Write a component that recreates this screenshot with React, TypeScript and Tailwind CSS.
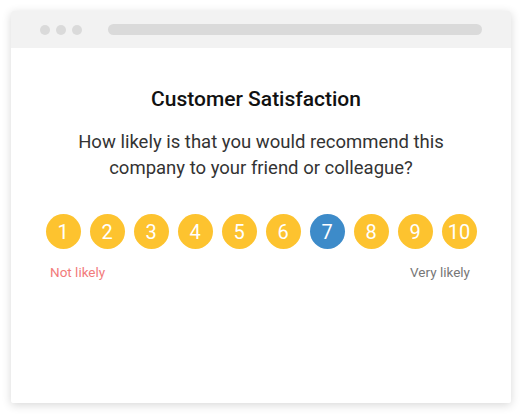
const scores = [1, 2, 3, 4, 5, 6, 7, 8, 9, 10];
const selected = 7;

export default function App() {
  return (
    <div className="min-h-screen bg-white pt-[11px] pl-[11px] font-['Roboto',sans-serif]">
      <div className="flex h-[392px] w-[500px] flex-col overflow-hidden rounded-[2px] bg-white shadow-[0_2px_10px_rgba(0,0,0,0.16)]">
        <div className="flex h-[37px] items-center bg-[#f2f2f2] px-[29px]">
          <div className="flex gap-[6px]">
            <span className="h-[10px] w-[10px] rounded-full bg-[#dadada]" />
            <span className="h-[10px] w-[10px] rounded-full bg-[#dadada]" />
            <span className="h-[10px] w-[10px] rounded-full bg-[#dadada]" />
          </div>
          <div className="ml-[26px] h-[11px] flex-1 rounded-full bg-[#dadada]" />
        </div>

        <div className="flex flex-col items-center">
          <h1 className="mt-[39px] pr-[10px] text-[21px] leading-[24px] font-medium text-[#111]">
            Customer Satisfaction
          </h1>
          <p className="mt-[18px] text-center text-[18.5px] leading-[26px] text-[#333]">
            How likely is that you would recommend this
            <br />
            company to your friend or colleague?
          </p>

          <div className="mt-[33px] flex gap-[9px]">
            {scores.map((n) => (
              <div
                key={n}
                className={
                  n === selected
                    ? "flex h-[35px] w-[35px] items-center justify-center rounded-full bg-[#3d8bc9] text-[20px] text-white"
                    : "flex h-[35px] w-[35px] items-center justify-center rounded-full bg-[#fdc32f] text-[20px] text-white"
                }
              >
                {n}
              </div>
            ))}
          </div>

          <div className="mt-[15px] ml-[39px] flex w-[420px] justify-between self-start text-[13.5px] leading-[17px]">
            <span className="text-[#f27b7b]">Not likely</span>
            <span className="text-[#777]">Very likely</span>
          </div>
        </div>
      </div>
    </div>
  );
}
